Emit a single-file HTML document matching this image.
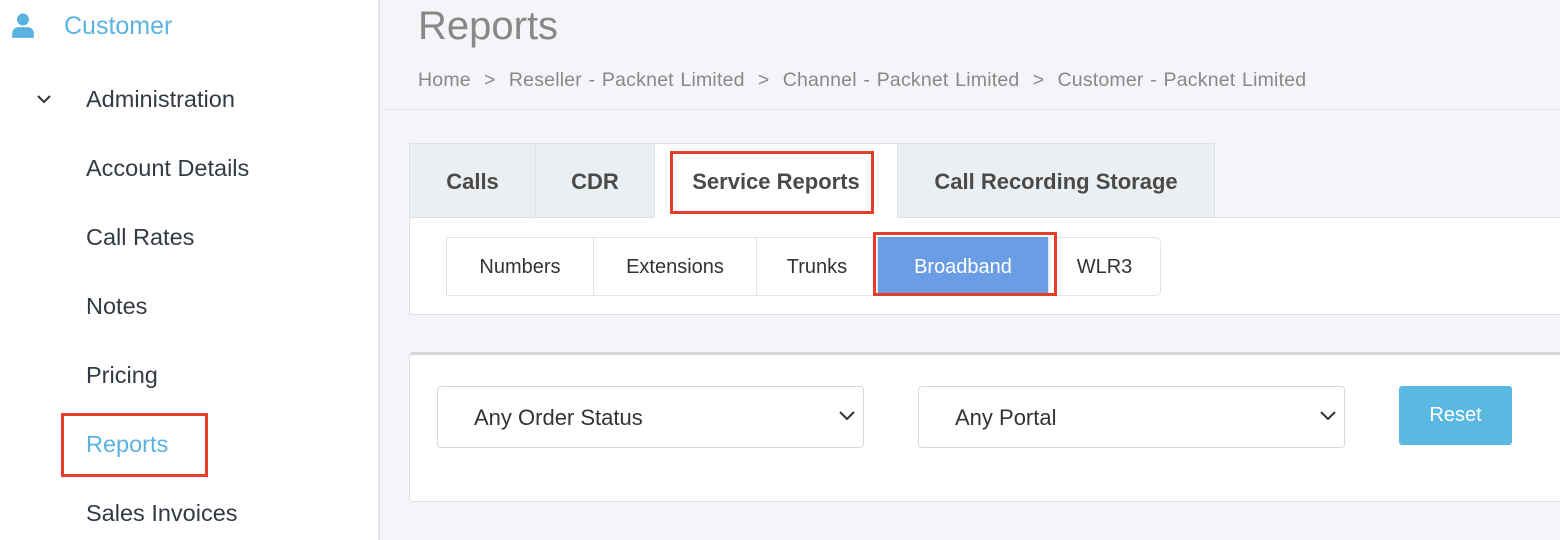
<!DOCTYPE html><html><head><style>
*{box-sizing:border-box;margin:0;padding:0}
body{width:1560px;height:540px;overflow:hidden;font-family:"Liberation Sans",sans-serif;background:#f4f5f8;position:relative;color:#333}
.a{position:absolute}
.sb{left:0;top:0;width:380px;height:540px;background:#fff;border-right:2px solid #e3e4e8}
.nav{font-size:23.5px;color:#333a44}
.red{border:3px solid #e53e2b}
.tab{top:143px;height:75px;background:#eceff1;border:1px solid #dde1e4;font-size:22px;font-weight:bold;color:#4a4a4a;display:flex;align-items:center;justify-content:center;padding-top:2px}
.sub{top:237px;height:59px;background:#fff;border:1px solid #e3e5e8;font-size:20px;color:#333;display:flex;align-items:center;justify-content:center;padding-top:2px}
.sel{top:386px;height:62px;width:427px;background:#fff;border:1px solid #d7d9dd;border-radius:4px;font-size:22px;color:#333;padding-left:36px;padding-top:2px;display:flex;align-items:center}
</style></head><body>
<div class="a sb"></div>
<svg class="a" style="left:11px;top:13px" width="24" height="26" viewBox="0 0 22 24"><circle cx="11" cy="6" r="5.5" fill="#5bb3e2"/><path d="M1 23v-4c0-4 3-6 6-6h8c3 0 6 2 6 6v4z" fill="#5bb3e2"/></svg>
<div class="a" style="left:64px;top:12px;font-size:25px;color:#5bb3e2">Customer</div>
<svg class="a" style="left:36px;top:94px" width="16" height="10"><path d="M2 2l6 6 6-6" stroke="#333" stroke-width="2" fill="none"/></svg>
<div class="a nav" style="left:86px;top:86px">Administration</div>
<div class="a nav" style="left:86px;top:155px">Account Details</div>
<div class="a nav" style="left:86px;top:224px">Call Rates</div>
<div class="a nav" style="left:86px;top:293px">Notes</div>
<div class="a nav" style="left:86px;top:362px">Pricing</div>
<div class="a nav" style="left:86px;top:431px;color:#5bb3e2">Reports</div>
<div class="a red" style="left:61px;top:413px;width:147px;height:64px"></div>
<div class="a nav" style="left:86px;top:500px">Sales Invoices</div>
<div class="a" style="left:382px;top:109px;width:1178px;height:1px;background:#e3e4e8"></div>
<div class="a" style="left:418px;top:4px;font-size:40px;color:#888">Reports</div>
<div class="a" style="left:418px;top:69px;font-size:19.5px;color:#888;word-spacing:1px;letter-spacing:0.2px">Home &nbsp;&gt;&nbsp; Reseller - Packnet Limited &nbsp;&gt;&nbsp; Channel - Packnet Limited &nbsp;&gt;&nbsp; Customer - Packnet Limited</div>
<div class="a" style="left:409px;top:217px;width:1151px;height:98px;background:#fff;border:1px solid #dde1e4;border-right:none"></div>
<div class="a tab" style="left:409px;width:127px">Calls</div>
<div class="a tab" style="left:535px;width:120px">CDR</div>
<div class="a tab" style="left:654px;width:244px;background:#fff;border-bottom-color:#fff">Service Reports</div>
<div class="a tab" style="left:897px;width:318px">Call Recording Storage</div>
<div class="a red" style="left:670px;top:151px;width:204px;height:63px"></div>
<div class="a sub" style="left:446px;width:148px">Numbers</div>
<div class="a sub" style="left:593px;width:164px">Extensions</div>
<div class="a sub" style="left:756px;width:122px">Trunks</div>
<div class="a sub" style="left:1048px;width:113px;border-radius:0 5px 5px 0">WLR3</div>
<div class="a sub" style="left:878px;width:170px;background:#6a9de3;color:#fff;border-color:#6a9de3">Broadband</div>
<div class="a red" style="left:873px;top:232px;width:184px;height:64px"></div>
<div class="a" style="left:409px;top:352px;width:1151px;height:150px;background:#fff;border:1px solid #dde1e4;border-top:3px solid #d5d9dd;border-right:none;border-radius:4px 0 0 4px"></div>
<div class="a sel" style="left:437px">Any Order Status</div>
<div class="a sel" style="left:918px">Any Portal</div>
<svg class="a" style="left:838px;top:410px" width="18" height="12"><path d="M2 2l7 7 7-7" stroke="#333" stroke-width="2" fill="none"/></svg>
<svg class="a" style="left:1319px;top:410px" width="18" height="12"><path d="M2 2l7 7 7-7" stroke="#333" stroke-width="2" fill="none"/></svg>
<div class="a" style="left:1399px;top:386px;width:113px;height:59px;background:#5bb8e0;border-radius:3px;color:#fff;font-size:20px;display:flex;align-items:center;justify-content:center">Reset</div>
</body></html>
